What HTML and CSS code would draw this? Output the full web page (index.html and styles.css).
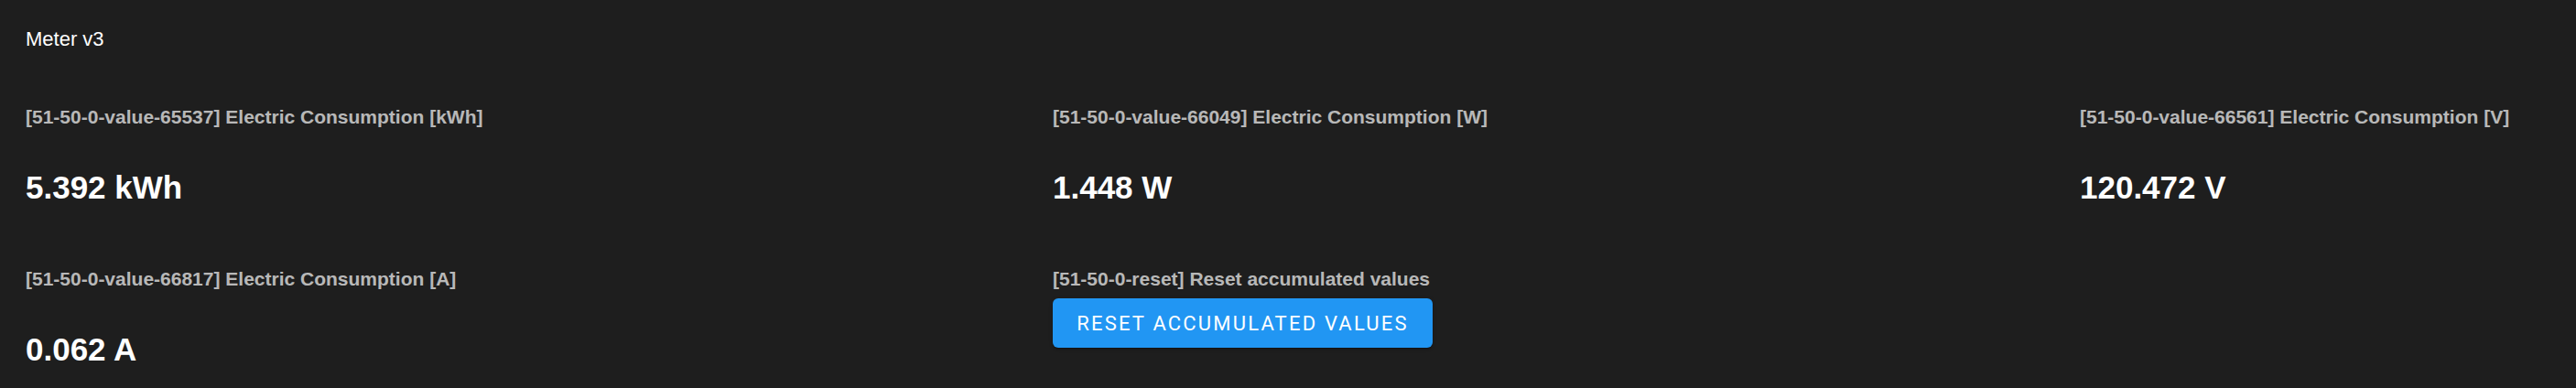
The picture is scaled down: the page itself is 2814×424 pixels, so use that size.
FILE: index.html
```html
<!DOCTYPE html>
<html lang="en">
<head>
<meta charset="utf-8">
<title>Meter v3</title>
<link rel="stylesheet" href="styles.css">
</head>
<body>
<div class="page">
  <div class="title">Meter v3</div>
  <div class="grid">
    <div class="cell">
      <div class="label">[51-50-0-value-65537] Electric Consumption [kWh]</div>
      <div class="value">5.392 kWh</div>
    </div>
    <div class="cell">
      <div class="label">[51-50-0-value-66049] Electric Consumption [W]</div>
      <div class="value">1.448 W</div>
    </div>
    <div class="cell">
      <div class="label">[51-50-0-value-66561] Electric Consumption [V]</div>
      <div class="value">120.472 V</div>
    </div>
    <div class="cell">
      <div class="label">[51-50-0-value-66817] Electric Consumption [A]</div>
      <div class="value">0.062 A</div>
    </div>
    <div class="cell">
      <div class="label">[51-50-0-reset] Reset accumulated values</div>
      <button class="btn" type="button">Reset accumulated values</button>
    </div>
  </div>
</div>
</body>
</html>
```

FILE: styles.css
```css
html, body {
  margin: 0;
  padding: 0;
  background: #1e1e1e;
  overflow: hidden;
}

.page {
  padding: 30px 0 0 28px;
  font-family: "Liberation Sans", Arial, sans-serif;
  color: #ffffff;
}

.title {
  font-size: 22px;
  line-height: 26px;
  margin-bottom: 60px;
}

.grid {
  display: grid;
  grid-template-columns: 1122px 1122px 1fr;
  row-gap: 68px;
  align-items: start;
}

.cell {
  display: flex;
  flex-direction: column;
  align-items: flex-start;
}

.label {
  font-size: 21px;
  line-height: 24px;
  font-weight: bold;
  color: rgba(255, 255, 255, 0.7);
}

.value {
  margin-top: 45px;
  font-size: 35px;
  line-height: 40px;
  font-weight: bold;
  color: #ffffff;
}

.btn {
  margin-top: 9px;
  width: 415px;
  height: 54px;
  padding: 0;
  border: none;
  border-radius: 6px;
  background: #2196f3;
  color: #ffffff;
  font-family: Roboto, "Liberation Sans", sans-serif;
  font-size: 22px;
  font-weight: 400;
  letter-spacing: 0.1em;
  text-transform: uppercase;
  box-shadow: 0 3px 1px -2px rgba(0, 0, 0, 0.2), 0 2px 2px 0 rgba(0, 0, 0, 0.14), 0 1px 5px 0 rgba(0, 0, 0, 0.12);
  cursor: pointer;
}
```
